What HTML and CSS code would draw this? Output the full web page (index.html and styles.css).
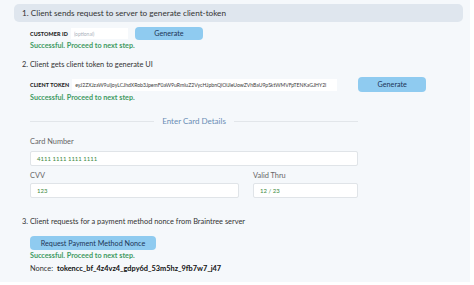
FILE: index.html
```html
<!DOCTYPE html>
<html lang="en">
<head>
  <meta charset="UTF-8" />
  <meta name="viewport" content="width=device-width, initial-scale=1.0"/>
  <title>Braintree Flow</title>
  <link rel="stylesheet" href="styles.css">
</head>
<body>
  <div class="page">

    <!-- Step 1 -->
    <div class="step-title active">1. Client sends request to server to generate client-token</div>
    <div class="step-body">
      <div class="row row-customer">
        <span class="field-label">CUSTOMER ID</span>
        <input class="small-input customer-input" type="text" placeholder="(optional)" />
        <button class="btn btn-generate">Generate</button>
      </div>
      <div class="success">Successful. Proceed to next step.</div>
    </div>

    <!-- Step 2 -->
    <div class="step-title step-2">2. Client gets client token to generate UI</div>
    <div class="step-body">
      <div class="row row-token">
        <span class="field-label">CLIENT TOKEN</span>
        <div class="small-input token-input">eyJ2ZXJzaW9uIjoyLCJhdXRob3JpemF0aW9uRmluZ2VycHJpbnQiOiJleUowZVhBaU9pSktWMVFpTENKaGJHY2l</div>
        <button class="btn btn-generate btn-token">Generate</button>
      </div>
      <div class="success">Successful. Proceed to next step.</div>

      <div class="divider"><span>Enter Card Details</span></div>

      <div class="card-form">
        <label class="card-label">Card Number</label>
        <div class="card-input">4111 1111 1111 1111</div>
        <div class="card-split">
          <div>
            <label class="card-label">CVV</label>
            <div class="card-input">123</div>
          </div>
          <div>
            <label class="card-label">Valid Thru</label>
            <div class="card-input">12 / 23</div>
          </div>
        </div>
      </div>
    </div>

    <!-- Step 3 -->
    <div class="step-title step-3">3. Client requests for a payment method nonce from Braintree server</div>
    <div class="step-body">
      <button class="btn btn-nonce">Request Payment Method Nonce</button>
      <div class="success">Successful. Proceed to next step.</div>
      <div class="nonce">Nonce: <b>tokencc_bf_4z4vz4_gdpy6d_53m5hz_9fb7w7_j47</b></div>
    </div>

  </div>
</body>
</html>
```

FILE: styles.css
```css
body {
  margin: 0;
  padding: 0;
  font-family: 'Lato', 'Segoe UI', sans-serif;
  background-color: #ffffff;
  color: #333;
}

.page {
  width: 470px;
  height: 282px;
  box-sizing: border-box;
  padding: 4px 7px 0 14px;
  background-color: #f5f8fb;
  overflow: hidden;
}

.step-title {
  height: 18px;
  line-height: 18px;
  padding: 0 8px;
  font-size: 7.4px;
  color: #333;
  border-radius: 5px;
}

.step-title.active {
  background-color: #dfe6ee;
  font-size: 8.2px;
}

.step-2 {
  margin-top: 5px;
}

.step-3 {
  margin-top: 15px;
}

.step-body {
  padding-left: 16px;
}

.row {
  display: flex;
  align-items: center;
}

.row-customer {
  height: 13px;
  margin-top: 5px;
}

.row-token {
  height: 15px;
  margin-top: 3px;
}

.field-label {
  font-size: 5.4px;
  font-weight: 900;
  color: #222;
  letter-spacing: 0.1px;
}

.small-input {
  box-sizing: border-box;
  height: 11px;
  border: none;
  background-color: #fff;
  font-family: inherit;
  font-size: 5px;
  padding: 0 3px;
  outline: none;
}

.small-input::placeholder {
  color: #aab1ba;
}

.customer-input {
  width: 57px;
  margin-left: 3px;
}

.token-input {
  width: 265px;
  height: 12px;
  line-height: 12px;
  margin-left: 3px;
  font-size: 5.1px;
  color: #3a3a3a;
  white-space: nowrap;
  overflow: hidden;
}

.btn {
  border: none;
  border-radius: 4px;
  background-color: #8fcbf0;
  color: #1d3557;
  font-family: inherit;
  font-size: 7.2px;
  padding: 0;
  cursor: pointer;
}

.btn-generate {
  width: 68px;
  height: 13px;
  margin-left: 7px;
}

.btn-token {
  height: 15px;
  margin-left: 21px;
}

.success {
  height: 10px;
  line-height: 10px;
  margin-top: 1px;
  font-size: 7.2px;
  font-weight: 700;
  color: #3f9a62;
}

.divider {
  width: 328px;
  height: 14px;
  margin-top: 11px;
  display: flex;
  align-items: center;
  gap: 8px;
  font-size: 8px;
  color: #6a8db5;
}

.divider::before,
.divider::after {
  content: "";
  flex: 1;
  height: 1px;
  background-color: #e2e6ea;
}

.card-form {
  width: 328px;
  margin-top: 9px;
}

.card-label {
  display: block;
  height: 10px;
  line-height: 10px;
  font-size: 7.4px;
  color: #666;
}

.card-input {
  box-sizing: border-box;
  height: 15px;
  line-height: 13px;
  margin-top: 4px;
  padding: 0 6px;
  background-color: #fff;
  border: 1px solid #e0e4e8;
  border-radius: 2px;
  font-size: 6px;
  color: #3d8a3d;
}

.card-split {
  display: grid;
  grid-template-columns: 209px 105px;
  gap: 14px;
  margin-top: 5px;
}

.card-split .card-input {
  margin-top: 2px;
}

.btn-nonce {
  display: block;
  width: 126px;
  height: 14px;
  margin-top: 5px;
}

.nonce {
  height: 10px;
  line-height: 10px;
  margin-top: 3px;
  font-size: 7.4px;
  color: #333;
}

.nonce b {
  margin-left: 2px;
  color: #111;
}
```
